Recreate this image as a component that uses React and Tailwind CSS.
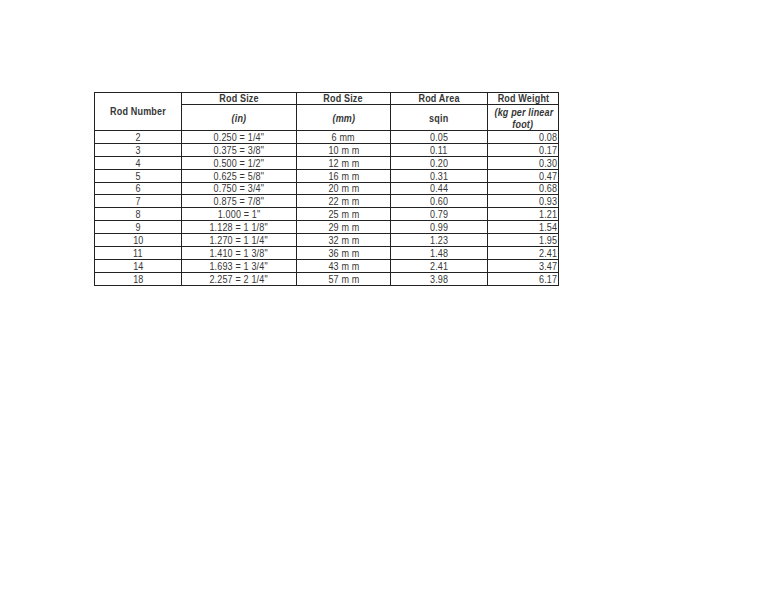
const rows = [
  ['2', '0.250 = 1/4"', '6 mm', '0.05', '0.08'],
  ['3', '0.375 = 3/8"', '10 m m', '0.11', '0.17'],
  ['4', '0.500 = 1/2"', '12 m m', '0.20', '0.30'],
  ['5', '0.625 = 5/8"', '16 m m', '0.31', '0.47'],
  ['6', '0.750 = 3/4"', '20 m m', '0.44', '0.68'],
  ['7', '0.875 = 7/8"', '22 m m', '0.60', '0.93'],
  ['8', '1.000 = 1"', '25 m m', '0.79', '1.21'],
  ['9', '1.128 = 1 1/8"', '29 m m', '0.99', '1.54'],
  ['10', '1.270 = 1 1/4"', '32 m m', '1.23', '1.95'],
  ['11', '1.410 = 1 3/8"', '36 m m', '1.48', '2.41'],
  ['14', '1.693 = 1 3/4"', '43 m m', '2.41', '3.47'],
  ['18', '2.257 = 2 1/4"', '57 m m', '3.98', '6.17'],
];

const cell = 'border border-[#222] p-0 text-center overflow-visible';

// narrow text, like Arial Narrow in the sheet
function N({ children, right }) {
  return (
    <span className={`inline-block whitespace-nowrap scale-x-[0.82] ${right ? 'origin-right' : 'origin-center'}`}>
      {children}
    </span>
  );
}

export default function App() {
  return (
    <div
      className="w-[768px] h-[594px] bg-white pt-[92px] pl-[94px] text-[#363636] text-[11px] tracking-[0.2px]"
      style={{ fontFamily: '"Liberation Sans", Arial, sans-serif' }}
    >
      <table className="border-collapse table-fixed w-[464px]">
        <colgroup>
          <col className="w-[87px]" />
          <col className="w-[115px]" />
          <col className="w-[94px]" />
          <col className="w-[97px]" />
          <col className="w-[71px]" />
        </colgroup>
        <thead>
          <tr className="h-[12px] leading-[11px]">
            <th rowSpan={2} className={`${cell} font-bold`}><N>Rod Number</N></th>
            <th className={`${cell} font-bold`}><N>Rod Size</N></th>
            <th className={`${cell} font-bold`}><N>Rod Size</N></th>
            <th className={`${cell} font-bold`}><N>Rod Area</N></th>
            <th className={`${cell} font-bold`}><N>Rod Weight</N></th>
          </tr>
          <tr className="h-[26px] leading-[12px]">
            <th className={`${cell} font-bold italic`}><N>(in)</N></th>
            <th className={`${cell} font-bold italic`}><N>(mm)</N></th>
            <th className={`${cell} font-bold`}><N>sqin</N></th>
            <th className={`${cell} font-bold italic`}>
              <N>(kg per linear</N>
              <br />
              <N>foot)</N>
            </th>
          </tr>
        </thead>
        <tbody>
          {rows.map((r) => (
            <tr key={r[0]} className="h-[12.9px] leading-[11px]">
              <td className={`${cell} align-bottom`}><N>{r[0]}</N></td>
              <td className={`${cell} align-bottom`}><N>{r[1]}</N></td>
              <td className={`${cell} align-bottom`}><N>{r[2]}</N></td>
              <td className={`${cell} align-bottom`}><N>{r[3]}</N></td>
              <td className="border border-[#222] p-0 text-right align-bottom pr-[1px]">
                <N right>{r[4]}</N>
              </td>
            </tr>
          ))}
        </tbody>
      </table>
    </div>
  );
}
